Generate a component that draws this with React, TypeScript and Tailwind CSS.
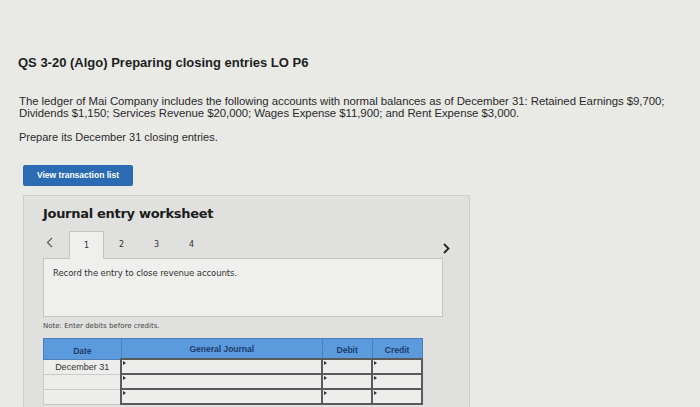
import React from "react";

const sans = { fontFamily: '"Liberation Sans", Arial, sans-serif' };
const verdana = { fontFamily: '"DejaVu Sans", Verdana, sans-serif' };

const rows = ["December 31", "", ""];

function InputCell() {
  return (
    <td className="relative border-2 border-[#5a5a5a] bg-[#ededeb] p-0">
      <span className="absolute left-[1px] top-[1px] h-0 w-0 border-b-[2px] border-l-[3px] border-t-[2px] border-b-transparent border-l-[#333] border-t-transparent" />
    </td>
  );
}

export default function App() {
  return (
    <div className="h-[407px] w-[700px] overflow-hidden bg-[#e9e9e6] pl-[18px] pt-[55px] text-[#222]" style={sans}>
      <h1 className="text-[13px] font-bold leading-4 text-[#1e1e1e]">QS 3-20 (Algo) Preparing closing entries LO P6</h1>

      <p className="mt-[24px] pl-[1px] text-[11.4px] leading-[12px] tracking-[-0.05px] text-[#2a2a2a]">
        The ledger of Mai Company includes the following accounts with normal balances as of December 31: Retained Earnings $9,700;
        <br />
        Dividends $1,150; Services Revenue $20,000; Wages Expense $11,900; and Rent Expense $3,000.
      </p>
      <p className="mt-[12px] pl-[1px] text-[11px] leading-[12px] text-[#2a2a2a]">Prepare its December 31 closing entries.</p>

      <button className="ml-[5px] mt-[22px] flex h-[21px] w-[110px] items-center justify-center rounded-[2px] bg-[#2a6bb3] text-[8.5px] font-bold text-white">
        View transaction list
      </button>

      <div className="ml-[5px] mt-[9px] h-[260px] w-[447px] border border-[#cdcdcb] bg-[#e0e0de] pl-[19px] pt-[10px]">
        <h2 className="text-[13px] font-bold leading-4 tracking-[-0.3px] text-[#1c1c1c]" style={verdana}>
          Journal entry worksheet
        </h2>

        <div className="mt-[9px] flex h-[27px] w-[413px] items-center" style={verdana}>
          <svg className="ml-[3px] mr-[16px] mb-[5px]" width="7" height="11" viewBox="0 0 7 11" fill="none">
            <path d="M6 1 L1.5 5.5 L6 10" stroke="#666" strokeWidth="1.4" />
          </svg>
          <div className="-mb-[1px] flex h-[28px] w-[35px] items-center justify-center self-end border border-b-0 border-[#c4c4c2] bg-[#efefed] text-[8px] text-[#333]">
            1
          </div>
          <div className="flex w-[35px] justify-center text-[8px] text-[#333]">2</div>
          <div className="flex w-[35px] justify-center text-[8px] text-[#333]">3</div>
          <div className="flex w-[35px] justify-center text-[8px] text-[#333]">4</div>
          <svg className="ml-auto mr-[6px] mt-[8px]" width="7" height="11" viewBox="0 0 7 11" fill="none">
            <path d="M1 1 L5.5 5.5 L1 10" stroke="#222" strokeWidth="1.8" />
          </svg>
        </div>

        <div className="h-[59px] w-[400px] border border-[#c4c4c2] bg-[#efefed] pl-[9px] pt-[8px]" style={verdana}>
          <p className="text-[8.5px] tracking-[-0.1px] text-[#333]">Record the entry to close revenue accounts.</p>
        </div>

        <p className="mt-[4px] text-[7px] text-[#444]" style={verdana}>Note: Enter debits before credits.</p>

        <table className="mt-[6px] w-[380px] border-collapse border border-[#8a8a8a] text-[8.5px]" style={sans}>
          <thead>
            <tr className="h-[21px] bg-[#5c9ade] font-bold text-[#1d3d6e]">
              <th className="w-[78px] border border-[#4c7fb8] pb-[1px] pt-[6px] align-bottom">Date</th>
              <th className="w-[202px] border border-[#4c7fb8] pt-[4px] align-top">General Journal</th>
              <th className="w-[50px] border border-[#4c7fb8] pt-[5px] align-top">Debit</th>
              <th className="w-[50px] border border-[#4c7fb8] pt-[5px] align-top">Credit</th>
            </tr>
          </thead>
          <tbody>
            {rows.map((date, i) => (
              <tr key={i} className="h-[15px]">
                <td className="border border-[#c9c9c7] bg-[#ededeb] p-0 text-center text-[9px] leading-[12px] text-[#333]">{date}</td>
                <InputCell />
                <InputCell />
                <InputCell />
              </tr>
            ))}
          </tbody>
        </table>
      </div>
    </div>
  );
}
